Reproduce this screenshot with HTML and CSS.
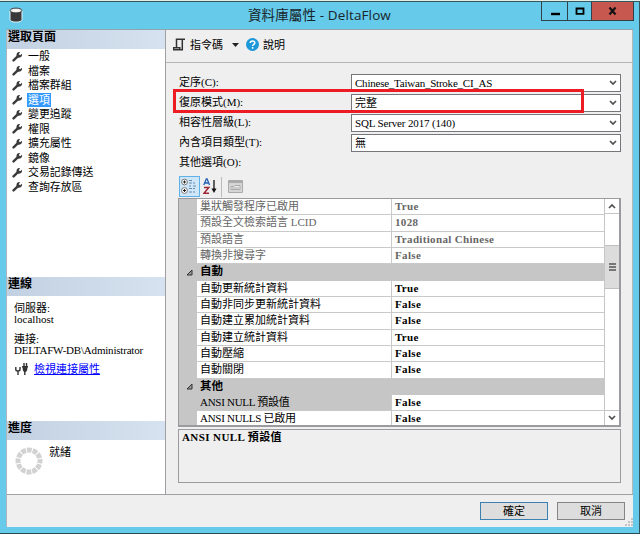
FILE: index.html
```
<!DOCTYPE html>
<html lang="zh-Hant">
<head>
<meta charset="utf-8">
<title>資料庫屬性 - DeltaFlow</title>
<link rel="stylesheet" href="styles.css">
</head>
<body>
<svg class="defs" width="0" height="0">
  <symbol id="wrench" viewBox="0 0 12 12"><path d="M1.7 10.3 6.2 5.8" stroke="#3b3b3b" stroke-width="2.6" stroke-linecap="round"/><path d="M10.9 3.1 8.9 4.7 7.4 3.6 8.8 1.1C6.3.6 4.7 2.2 4.9 4.5c0 2.3 1.8 3.2 3.8 2.7 1.8-.5 2.7-2.2 2.2-4.1z" fill="#3b3b3b"/></symbol>
  <symbol id="chev" viewBox="0 0 8 6"><path d="M1 1 4 4 7 1" fill="none" stroke="#505050" stroke-width="1.7"/></symbol>
</svg>
<div class="window">
  <header class="titlebar">
    <svg class="db" width="14" height="16" viewBox="0 0 14 16"><path d="M1 3.5v9C1 16 13 16 13 12.5v-9z" fill="#39393b" stroke="#e6f3f8"/><ellipse cx="7" cy="3.5" rx="5.8" ry="2.4" fill="#f5f5f5" stroke="#39393b"/></svg>
    <h1>資料庫屬性 - DeltaFlow</h1>
    <div class="winbtns">
      <span class="min"><svg width="12" height="12"><path d="M2 9h9" stroke="#000" stroke-width="2.4"/></svg></span>
      <span class="max"><svg width="12" height="12"><path d="M2.5 3.5h7v5.4h-7z" fill="none" stroke="#000" stroke-width="1.8"/></svg></span>
      <span class="close"><svg width="12" height="12"><path d="M2.5 2.5l6 7m0-7l-6 7" stroke="#111" stroke-width="2.1"/></svg></span>
    </div>
  </header>
  <div class="client">
    <div class="main">
      <aside>
        <section class="pages">
          <h2>選取頁面</h2>
          <ul>
            <li><svg><use href="#wrench"/></svg><span>一般</span></li>
            <li><svg><use href="#wrench"/></svg><span>檔案</span></li>
            <li><svg><use href="#wrench"/></svg><span>檔案群組</span></li>
            <li><svg><use href="#wrench"/></svg><span class="on">選項</span></li>
            <li><svg><use href="#wrench"/></svg><span>變更追蹤</span></li>
            <li><svg><use href="#wrench"/></svg><span>權限</span></li>
            <li><svg><use href="#wrench"/></svg><span>擴充屬性</span></li>
            <li><svg><use href="#wrench"/></svg><span>鏡像</span></li>
            <li><svg><use href="#wrench"/></svg><span>交易記錄傳送</span></li>
            <li><svg><use href="#wrench"/></svg><span>查詢存放區</span></li>
          </ul>
        </section>
        <section class="conn">
          <h2>連線</h2>
          <dl><dt>伺服器:</dt><dd>localhost</dd><dt>連接:</dt><dd class="user">DELTAFW-DB\Administrator</dd></dl>
          <p class="view"><svg width="13" height="13" viewBox="0 0 13 13"><path d="M.8 4v2.500c0 2 4.200 2 4.200 0V4M3 8v4M9 0v3M11.500 0v3M9.800 8v4" fill="none" stroke="#333" stroke-width="1.400"/><path d="M7 3h6v1.500h-.6C12.400 8 11.400 9 9.900 9S7.600 8 7.600 4.500H7z" fill="#333"/></svg><a href="#">檢視連接屬性</a></p>
        </section>
        <section class="prog">
          <h2>進度</h2>
          <div><svg width="28" height="28" viewBox="0 0 28 28"><circle cx="14" cy="14" r="11" fill="none" stroke="#d2d2d2" stroke-width="5" stroke-dasharray="4.76 1" stroke-dashoffset="2.4"/></svg><span>就緒</span></div>
        </section>
      </aside>
      <div class="content">
        <nav>
          <svg width="12" height="13" viewBox="0 0 12 13"><path d="M3.5 10.500V1.200H12M9.300 1.500v10.300H.5V9.700h6.300v2" fill="none" stroke="#333" stroke-width="1.500"/></svg>
          <span class="script">指令碼</span>
          <svg class="tri" width="7" height="4"><path d="M0 0h7L3.500 4z" fill="#222"/></svg>
          <svg width="13" height="13" viewBox="0 0 13 13"><circle cx="6.500" cy="6.500" r="6.500" fill="#1c97d8"/><path d="M4.300 5C4.300 2.300 8.800 2.300 8.800 4.900 8.800 6.300 6.600 6.300 6.600 8M6.600 9v1.700" fill="none" stroke="#fff" stroke-width="1.600"/></svg>
          <span class="help">說明</span>
        </nav>
        <form>
          <div class="field"><label>定序(C):</label><div class="combo"><span class="coll">Chinese_Taiwan_Stroke_CI_AS</span><svg><use href="#chev"/></svg></div></div>
          <div class="field marked"><label>復原模式(M):</label><div class="combo"><span>完整</span><svg><use href="#chev"/></svg></div></div>
          <div class="field"><label>相容性層級(L):</label><div class="combo"><span class="sql">SQL Server 2017 (140)</span><svg><use href="#chev"/></svg></div></div>
          <div class="field"><label>內含項目類型(T):</label><div class="combo"><span>無</span><svg><use href="#chev"/></svg></div></div>
          <div class="field other"><label>其他選項(O):</label></div>
        </form>
        <div class="tools">
          <span class="cat"><svg width="17" height="17" viewBox="0 0 17 17"><g fill="#fff" stroke="#777"><circle cx="3.500" cy="4" r="2.900"/><circle cx="3.500" cy="12.500" r="2.900"/></g><path d="M2 4h3M3.500 2.500v3M2 12.500h3M3.500 11v3" stroke="#222"/><path d="M8 2.500h3M8 5h6M8 8h2M8 10.500h6M8 14h6M12 8h3" stroke="#668aac" stroke-dasharray="3 1"/></svg></span>
          <svg width="14" height="17" viewBox="0 0 14 17"><path d="M.8 7 3.300 1h.8L6.500 7M2 5h3.500" fill="none" stroke="#2861b5" stroke-width="1.300"/><path d="M1 9.500h4.800L1 15.300h5" fill="none" stroke="#a12a38" stroke-width="1.500"/><path d="M11 2v10" stroke="#111" stroke-width="1.300"/><path d="M8.500 10.500h5L11 15z" fill="#111"/></svg>
          <i></i>
          <svg width="15" height="13" viewBox="0 0 15 13"><path d="M.5.5h14v12H.5z" fill="#d5d5d5" stroke="#aaa"/><path d="M1 2h13" stroke="#aaa" stroke-width="2"/><path d="M3 6.500h3l1-1h5v4H3zM4 8h7" fill="#ececec" stroke="#aaa"/></svg>
        </div>
        <div class="grid">
          <div class="rows">
            <div class="row dim"><b></b><span>巢狀觸發程序已啟用</span><strong>True</strong></div>
            <div class="row dim"><b></b><span>預設全文檢索語言 LCID</span><strong>1028</strong></div>
            <div class="row dim"><b></b><span>預設語言</span><strong>Traditional Chinese</strong></div>
            <div class="row dim"><b></b><span>轉換非搜尋字</span><strong>False</strong></div>
            <div class="row group"><b><svg width="7" height="7"><path d="M6 1v5H1z" fill="#999" stroke="#333"/></svg></b><span>自動</span></div>
            <div class="row"><b></b><span>自動更新統計資料</span><strong>True</strong></div>
            <div class="row"><b></b><span>自動非同步更新統計資料</span><strong>False</strong></div>
            <div class="row"><b></b><span>自動建立累加統計資料</span><strong>False</strong></div>
            <div class="row"><b></b><span>自動建立統計資料</span><strong>True</strong></div>
            <div class="row"><b></b><span>自動壓縮</span><strong>False</strong></div>
            <div class="row"><b></b><span>自動關閉</span><strong>False</strong></div>
            <div class="row group"><b><svg width="7" height="7"><path d="M6 1v5H1z" fill="#999" stroke="#333"/></svg></b><span>其他</span></div>
            <div class="row ansi sel"><b></b><span>ANSI NULL 預設值</span><strong>False</strong></div>
            <div class="row ansi"><b></b><span>ANSI NULLS 已啟用</span><strong>False</strong></div>
          </div>
          <div class="scroll">
            <span><svg class="up"><use href="#chev"/></svg></span>
            <div class="track"><div class="thumb"><svg width="7" height="8"><path d="M0 1h7M0 4h7M0 7h7" stroke="#555" stroke-width="1.400"/></svg></div></div>
            <span><svg><use href="#chev"/></svg></span>
          </div>
        </div>
        <div class="desc">ANSI NULL 預設值</div>
      </div>
    </div>
    <footer>
      <button class="ok">確定</button><button>取消</button>
      <svg class="grip" width="8" height="8"><path d="M6 0h2v2H6zM3 3h2v2H3zM6 3h2v2H6zM0 6h2v2H0zM3 6h2v2H3zM6 6h2v2H6z" fill="#c4c4c4"/></svg>
    </footer>
  </div>
</div>
</body>
</html>
```
FILE: styles.css
```
*, ::after { box-sizing: border-box; }
body { margin: 0; width: 640px; height: 534px; overflow: hidden; background: #e4eee4; padding-top: 1px;
  font: 11px/14px "Liberation Serif", "Noto Sans CJK TC", serif; color: #000; }
h1, h2, ul, dl, dd, p { margin: 0; padding: 0; font-size: inherit; }
svg { display: block; flex: none; }
.defs { position: absolute; }
.window { height: 533px; background: #66caea; border: 1px solid #35555f; border-left: 0; border-bottom-color: #2d4854; padding: 0 6px 6px 6px; display: flex; flex-direction: column; }
.titlebar { height: 27px; display: flex; align-items: flex-start; flex: none; }
.db { margin: 5px 0 0 3px; width: 14px; }
h1 { font: 13.5px/26px "Open Sans", "Noto Sans CJK TC", sans-serif; letter-spacing: .12px; color: #17252b; margin-left: 225px; white-space: nowrap; }
.winbtns { display: flex; height: 19px; margin-left: auto; margin-right: -1px; border: 1px solid #30414a; border-top: 0; }
.winbtns span { display: flex; align-items: center; justify-content: center; }
.min { width: 25px; }
.max { width: 25px; border-left: 1px solid #30414a; border-right: 1px solid #30414a; }
.close { width: 41px; background: #c75850; }
.client { flex: 1; display: flex; flex-direction: column; background: #efefef; border-top: 1px solid #8fa5af; border-left: 1px solid #a9b8bf; min-height: 0; }
.main { height: 465px; display: flex; border-bottom: 1px solid #a0a0a4; flex: none; }
aside { width: 159px; background: #fff; border-right: 1px solid #a0a0a4; display: flex; flex-direction: column; }
h2 { font-weight: bold; font-size: 12px; line-height: 15px; height: 19px; padding-left: 1px; background: linear-gradient(90deg, #c2d1e2, #d6e2ef); }
.pages { height: 247px; }
.conn { height: 144px; }
ul { list-style: none; }
li { height: 14.5px; display: flex; align-items: center; }
li svg { width: 11px; height: 11px; margin: 0 4px 0 5px; }
li span { padding: 0 1px; height: 14px; line-height: 14px; font-size: 10.9px; }
.on { background: #3399ff; color: #fff; }
dl { padding: 5px 0 0 7px; line-height: 11px; }
dt { height: 12px; line-height: 14px; }
dd { height: 19px; line-height: 13px; }
.user { height: 17px; letter-spacing: -.2px; }
.view { display: flex; align-items: center; padding-left: 8px; gap: 7px; margin-top: 1px; }
.view svg { margin-left: 0; }
a { color: #00f; margin-left: -1px; }
.prog div { display: flex; padding: 5px 0 0 8px; gap: 6px; }
.prog svg { margin-top: 2px; }
.content { flex: 1; padding-right: 11px; border-right: 1px solid #b8b8bc; min-width: 0; }
nav { height: 33px; border-bottom: 1px solid #b5b5b9; margin-right: -11px; padding-left: 7px; display: flex; align-items: center; font-size: 11px; padding-bottom: 3px; }
.script { margin: 0 9px 0 5px; }
.tri { margin-right: 7px; }
.help { margin-left: 4px; }
form { padding: 11px 0 0 13px; }
.field { display: flex; height: 20px; position: relative; }
label { width: 172px; line-height: 17px; }
.combo { flex: 1; height: 18px; background: #fff; border: 1px solid #77777b; display: flex; justify-content: space-between; align-items: center; padding: 0 3px; }
.combo svg, .scroll span svg { width: 8px; height: 6px; }
.coll { letter-spacing: -.23px; }
.sql { letter-spacing: -.15px; }
.marked::after { content: ""; position: absolute; z-index: 1; left: -6px; top: -5px; width: 411px; height: 24px; border: 3px solid #ed1c24; }
.other { height: 21px; }
.tools { display: flex; align-items: center; height: 23px; padding-left: 13px; gap: 3px; }
.cat { width: 21px; height: 21px; border: 1px solid #5fb2e8; background: #cfe6f8; padding: 1px; }
.tools i { width: 1px; height: 20px; background: #bbb; margin: 0 3px 0 1px; }
.grid { margin: 0 0 0 12px; height: 229px; border: 1px solid #9b9b9f; border-right-width: 2px; border-bottom-width: 2px; display: flex; overflow: hidden; background: #fff; }
.rows { flex: 1; overflow: hidden; }
.row { height: 16.35px; display: flex; line-height: 15px; }
.row b { width: 18px; background: #c6c6c6; display: flex; align-items: center; justify-content: center; padding-left: 3px; }
.row span { width: 195px; border-right: 1px solid #c9c9c9; border-bottom: 1px solid #c9c9c9; padding-left: 3px; }
.row strong { flex: 1; border-bottom: 1px solid #c9c9c9; padding-left: 3px; letter-spacing: .33px; }
.dim { color: #666; }
.group { background: #c6c6c6; font-weight: bold; }
.row.group span { border: 0; font-size: 11.5px; }
.ansi span { letter-spacing: -.28px; }
.sel span { background: #c6c6c6; }
.scroll { width: 15px; border-left: 1px solid #c6c6c6; display: flex; flex-direction: column; }
.scroll span { height: 15px; display: flex; align-items: center; justify-content: center; border-bottom: 1px solid #c6c6c6; }
.scroll span:last-child { border: 0; border-top: 1px solid #c6c6c6; }
.up { transform: rotate(180deg); }
.track { flex: 1; padding-top: 31px; }
.thumb { height: 44px; background: #dcdcdc; border: 1px solid #c0c0c0; border-width: 1px 0; display: flex; align-items: center; justify-content: center; }
.desc { margin: 2px 0 0 12px; height: 54px; border: 1px solid #9b9b9f; padding-left: 3px; font-weight: bold; line-height: 15px; letter-spacing: .4px; }
footer { flex: 1; display: flex; justify-content: flex-end; padding: 7px 8px 0 0; gap: 9px; position: relative; }
button { width: 68px; height: 18px; border: 1px solid #858589; background: #ddd; font: inherit; padding: 0; line-height: 15px; }
.ok { border-color: #3c7fb1; }
.grip { position: absolute; right: 0; bottom: 1px; }
```
